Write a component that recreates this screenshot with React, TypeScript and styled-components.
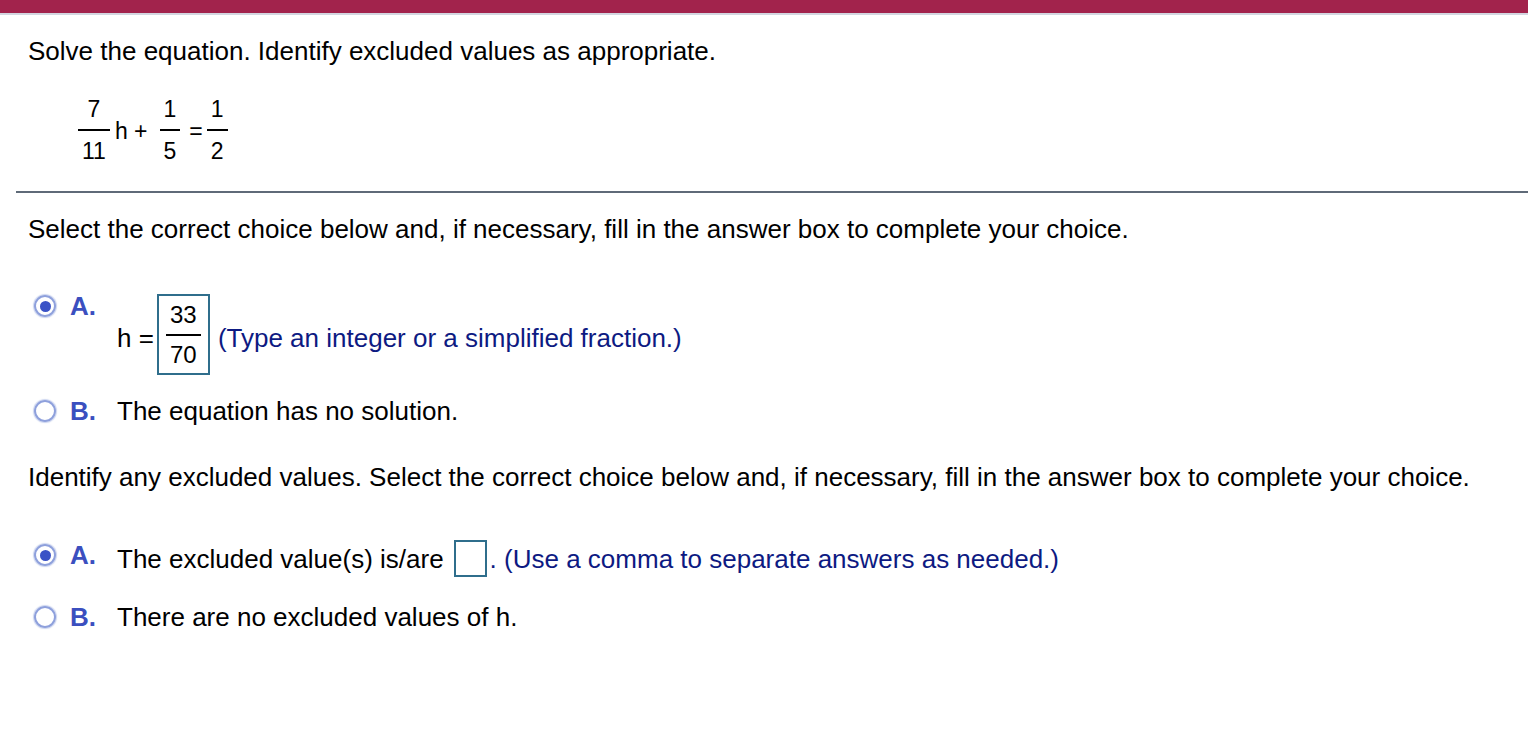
import React from 'react';
import styled, { createGlobalStyle } from 'styled-components';

const GlobalStyle = createGlobalStyle`
  body {
    margin: 0;
    background: #ffffff;
    font-family: 'Liberation Sans', Arial, sans-serif;
    color: #000000;
  }
`;

const TopBar = styled.div`
  height: 13px;
  background: #a2234c;
  border-bottom: 2px solid #d3d6e0;
`;

const Page = styled.div`
  padding-left: 16px;
`;

const Section = styled.div<{ $top: number }>`
  padding-left: 12px;
  padding-top: ${(p) => p.$top}px;
`;

const Prompt = styled.div<{ $top?: number }>`
  font-size: 26px;
  line-height: 30px;
  margin-top: ${(p) => p.$top ?? 0}px;
`;

const Equation = styled.div`
  display: flex;
  align-items: center;
  margin-left: 50px;
  margin-top: 31px;
  font-size: 23px;
`;

const Frac = styled.span<{ $size?: number; $line?: number; $gap?: number }>`
  display: inline-flex;
  flex-direction: column;
  align-items: center;
  font-size: ${(p) => p.$size ?? 23}px;
  line-height: ${(p) => p.$line ?? 24}px;
  padding: 0 ${(p) => (p.$gap ? 0 : 4)}px;
`;

const FracBar = styled.span<{ $gap?: number }>`
  align-self: stretch;
  height: 2px;
  background: #000;
  margin: ${(p) => p.$gap ?? 8}px -4px;
`;

const Sym = styled.span<{ $l: number; $r: number }>`
  margin-left: ${(p) => p.$l}px;
  margin-right: ${(p) => p.$r}px;
  padding-top: 2px;
`;

const Divider = styled.hr`
  border: none;
  height: 2px;
  background: #5f6a78;
  margin: 28px 0 0 0;
`;

const Option = styled.div<{ $top: number }>`
  display: flex;
  align-items: flex-start;
  margin-top: ${(p) => p.$top}px;
  padding-left: 6px;
  font-size: 26px;
  line-height: 30px;
`;

const Radio = styled.span<{ $checked?: boolean }>`
  box-sizing: border-box;
  flex: none;
  width: 22px;
  height: 22px;
  margin-top: 4px;
  border-radius: 50%;
  border: 2px solid #8ea0dc;
  box-shadow: 0 0 1px 1px rgba(140, 160, 220, 0.45);
  display: flex;
  align-items: center;
  justify-content: center;
  &::after {
    content: '';
    display: ${(p) => (p.$checked ? 'block' : 'none')};
    width: 11px;
    height: 11px;
    border-radius: 50%;
    background: #3a52c6;
  }
`;

const Letter = styled.span`
  flex: none;
  width: 47px;
  margin-left: 14px;
  color: #3b4fbf;
  font-weight: bold;
`;

const AnswerBlock = styled.div`
  display: flex;
  align-items: center;
  margin-top: 3px;
`;

const Lead = styled.span`
  padding-top: 6px;
`;

const AnswerBox = styled.span<{ $w: number; $h: number; $l: number }>`
  box-sizing: border-box;
  display: inline-flex;
  align-items: center;
  justify-content: center;
  flex: none;
  width: ${(p) => p.$w}px;
  height: ${(p) => p.$h}px;
  margin-left: ${(p) => p.$l}px;
  border: 2px solid #2f6e8c;
`;

const Hint = styled.span<{ $l: number; $pad: number }>`
  color: #0d1a82;
  margin-left: ${(p) => p.$l}px;
  padding-top: ${(p) => p.$pad}px;
`;

const Inline = styled.span`
  display: flex;
  align-items: center;
`;

export default function App() {
  return (
    <>
      <GlobalStyle />
      <TopBar />
      <Page>
        <Section $top={21}>
          <Prompt>Solve the equation. Identify excluded values as appropriate.</Prompt>
          <Equation>
            <Frac>
              <span>7</span>
              <FracBar />
              <span>11</span>
            </Frac>
            <Sym $l={5} $r={12}>h +</Sym>
            <Frac>
              <span>1</span>
              <FracBar />
              <span>5</span>
            </Frac>
            <Sym $l={9} $r={4}>=</Sym>
            <Frac>
              <span>1</span>
              <FracBar />
              <span>2</span>
            </Frac>
          </Equation>
        </Section>
        <Divider />
        <Section $top={21}>
          <Prompt>Select the correct choice below and, if necessary, fill in the answer box to complete your choice.</Prompt>
          <Option $top={47}>
            <Radio $checked />
            <Letter>A.</Letter>
            <AnswerBlock>
              <Lead>h =</Lead>
              <AnswerBox $w={53} $h={81} $l={3}>
                <Frac $size={24} $line={26} $gap={1}>
                  <span>33</span>
                  <FracBar $gap={6} />
                  <span>70</span>
                </Frac>
              </AnswerBox>
              <Hint $l={8} $pad={6}>(Type an integer or a simplified fraction.)</Hint>
            </AnswerBlock>
          </Option>
          <Option $top={21}>
            <Radio />
            <Letter>B.</Letter>
            <span>The equation has no solution.</span>
          </Option>
          <Prompt $top={36}>
            Identify any excluded values. Select the correct choice below and, if necessary, fill in the answer box to complete your choice.
          </Prompt>
          <Option $top={48}>
            <Radio $checked />
            <Letter>A.</Letter>
            <Inline>
              <span>The excluded value(s) is/are</span>
              <AnswerBox $w={33} $h={37} $l={10} />
              <Hint $l={3} $pad={0}>. (Use a comma to separate answers as needed.)</Hint>
            </Inline>
          </Option>
          <Option $top={25}>
            <Radio />
            <Letter>B.</Letter>
            <span>There are no excluded values of h.</span>
          </Option>
        </Section>
      </Page>
    </>
  );
}
